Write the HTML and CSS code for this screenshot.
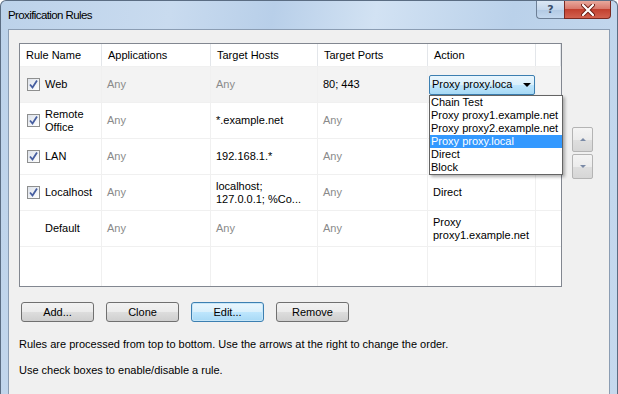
FILE: index.html
```html
<!DOCTYPE html>
<html lang="en">
<head>
    <meta charset="UTF-8">
    <title>Proxification Rules</title>
    <link rel="stylesheet" href="styles.css">
</head>
<body>
    <div class="window">
        <div class="titlebar">
            <span class="title">Proxification Rules</span>
            <div class="caption-buttons">
                <div class="cap-btn help">?</div>
                <div class="cap-btn close">
                    <svg width="14" height="12" viewBox="0 0 14 12">
                        <path d="M2 1 L12 11 M12 1 L2 11" stroke="#6b1d14" stroke-width="4" stroke-linecap="round"/>
                        <path d="M2 1 L12 11 M12 1 L2 11" stroke="#fff" stroke-width="2.2" stroke-linecap="round"/>
                    </svg>
                </div>
            </div>
        </div>

        <div class="client">
            <div class="list-area">
                <div class="listview">
                    <div class="lv-row header">
                        <div class="cell">Rule Name</div>
                        <div class="cell">Applications</div>
                        <div class="cell">Target Hosts</div>
                        <div class="cell">Target Ports</div>
                        <div class="cell">Action</div>
                        <div class="cell last"></div>
                    </div>

                    <div class="lv-row hot">
                        <div class="cell name"><span class="check"></span>Web</div>
                        <div class="cell any">Any</div>
                        <div class="cell any">Any</div>
                        <div class="cell">80; 443</div>
                        <div class="cell action-edit">
                            <div class="combo">
                                <span class="combo-text">Proxy proxy.loca</span>
                                <span class="combo-arrow"></span>
                                <ul class="combo-list">
                                    <li>Chain Test</li>
                                    <li>Proxy proxy1.example.net</li>
                                    <li>Proxy proxy2.example.net</li>
                                    <li class="selected">Proxy proxy.local</li>
                                    <li>Direct</li>
                                    <li>Block</li>
                                </ul>
                            </div>
                        </div>
                        <div class="cell last"></div>
                    </div>

                    <div class="lv-row">
                        <div class="cell name"><span class="check"></span>Remote<br>Office</div>
                        <div class="cell any">Any</div>
                        <div class="cell">*.example.net</div>
                        <div class="cell any">Any</div>
                        <div class="cell"></div>
                        <div class="cell last"></div>
                    </div>

                    <div class="lv-row">
                        <div class="cell name"><span class="check"></span>LAN</div>
                        <div class="cell any">Any</div>
                        <div class="cell">192.168.1.*</div>
                        <div class="cell any">Any</div>
                        <div class="cell"></div>
                        <div class="cell last"></div>
                    </div>

                    <div class="lv-row">
                        <div class="cell name"><span class="check"></span>Localhost</div>
                        <div class="cell any">Any</div>
                        <div class="cell">localhost;<br>127.0.0.1; %Co...</div>
                        <div class="cell any">Any</div>
                        <div class="cell">Direct</div>
                        <div class="cell last"></div>
                    </div>

                    <div class="lv-row">
                        <div class="cell name"><span class="no-check"></span>Default</div>
                        <div class="cell any">Any</div>
                        <div class="cell any">Any</div>
                        <div class="cell any">Any</div>
                        <div class="cell">Proxy<br>proxy1.example.net</div>
                        <div class="cell last"></div>
                    </div>

                    <div class="lv-row filler">
                        <div class="cell"></div>
                        <div class="cell"></div>
                        <div class="cell"></div>
                        <div class="cell"></div>
                        <div class="cell"></div>
                        <div class="cell last"></div>
                    </div>
                </div>

                <div class="order-buttons">
                    <div class="order-btn"><span class="tri up"></span></div>
                    <div class="order-btn"><span class="tri down"></span></div>
                </div>
            </div>

            <div class="buttons">
                <button type="button">Add...</button>
                <button type="button">Clone</button>
                <button type="button" class="focused">Edit...</button>
                <button type="button">Remove</button>
            </div>

            <p class="hint">Rules are processed from top to bottom. Use the arrows at the right to change the order.</p>
            <p class="hint">Use check boxes to enable/disable a rule.</p>
        </div>
    </div>
</body>
</html>
```

FILE: styles.css
```css
* {
    box-sizing: border-box;
}
body {
    margin: 0;
    font-family: "Liberation Sans", Arial, sans-serif; /* Arial widths */
    font-size: 11px;
    color: #000;
    background: #fff;
}

/* window frame */
.window {
    width: 618px;
    height: 394px;
    overflow: hidden;
    display: flex;
    flex-direction: column;
    border: 1px solid #5b6d83;
    border-bottom: none;
    border-radius: 6px 6px 0 0;
    background: linear-gradient(100deg, #bcd2ea 0%, #c9dbef 25%, #b8cfe9 40%, #d2e2f3 55%, #bad1ea 75%, #c6d9ee 100%);
}
.titlebar {
    height: 28px;
    display: flex;
    justify-content: space-between;
    align-items: flex-start;
    padding-left: 7px;
    padding-right: 6px;
}
.title {
    line-height: 28px;
    font-size: 11.5px;
    letter-spacing: -0.6px;
    color: #000;
}
.caption-buttons {
    display: flex;
}
.cap-btn {
    height: 18px;
    display: flex;
    align-items: center;
    justify-content: center;
    border: 1px solid #6d7f96;
    border-top: none;
}
.help {
    width: 28px;
    border-right: none;
    border-radius: 0 0 0 4px;
    background: linear-gradient(#dbe7f4 0%, #c5d7ec 50%, #b2c9e3 51%, #c4d8ee 100%);
    color: #3b4f6b;
    font-family: "DejaVu Sans", sans-serif;
    font-weight: bold;
    font-size: 11px;
}
.close {
    width: 47px;
    border-color: #7a2a22;
    border-radius: 0 0 4px 0;
    background: linear-gradient(#e8a89c 0%, #d9796c 45%, #c2402f 50%, #d2614f 100%);
}

/* client area */
.client {
    flex: 1;
    margin: 0 7px;
    border: 1px solid #8b9db3;
    border-bottom: none;
    background: #f0f0f0;
    padding: 13px 0 0 10px;
}
.list-area {
    display: flex;
    gap: 10px;
}
.listview {
    width: 543px;
    height: 244px;
    border: 1px solid #828790;
    background: #fff;
    display: flex;
    flex-direction: column;
}
.lv-row {
    display: grid;
    grid-template-columns: 82px 109px 107px 110px 108px 1fr;
    height: 36px;
    border-bottom: 1px solid #f0f0f0;
}
.lv-row.header {
    height: 23px;
    border-bottom: 1px solid #f0f0f0;
}
.lv-row.header .cell {
    padding-left: 6px;
    border-right: 1px solid #e3e6ea;
}
.lv-row.hot {
    background: #f3f3f3;
}
.lv-row.filler {
    flex: 1;
    border-bottom: none;
}
.cell {
    display: flex;
    align-items: center;
    padding-left: 5px;
    line-height: 13px;
    border-right: 1px solid #f0f0f0;
    white-space: nowrap;
}
.cell.last {
    border-right: none;
}
.cell.any {
    color: #8a8a8a;
}
.cell.name {
    padding-left: 7px;
}
.check, .no-check {
    width: 13px;
    height: 13px;
    margin-right: 5px;
    flex-shrink: 0;
}
.check {
    border: 1px solid #8e8f8f;
    background:
        url("data:image/svg+xml,%3Csvg xmlns='http://www.w3.org/2000/svg' width='11' height='11'%3E%3Cpath d='M2 5.5 L4.5 8.5 L9 1.5' fill='none' stroke='%23465ea0' stroke-width='1.8'/%3E%3C/svg%3E") center no-repeat,
        linear-gradient(135deg, #dde2ea, #ffffff);
}

/* inline combobox editing the Action column */
.cell.action-edit {
    padding-left: 1px;
}
.combo {
    position: relative;
    width: 107px;
    height: 20px;
    border: 1px solid #3c7fb1;
    border-radius: 2px;
    background: linear-gradient(#eaf6fd 0%, #d9f0fc 49%, #bee6fd 50%, #a7d9f5 100%);
    display: flex;
    align-items: center;
    padding-left: 2px;
}
.combo-text {
    width: 84px;
    white-space: nowrap;
}
.combo-arrow {
    margin-left: 7px;
    width: 0;
    height: 0;
    border-left: 4px solid transparent;
    border-right: 4px solid transparent;
    border-top: 4px solid #000;
}
.combo-list {
    position: absolute;
    top: 19px;
    left: -1px;
    width: 134px;
    margin: 0;
    padding: 0;
    list-style: none;
    background: #fff;
    border: 1px solid #646464;
    box-shadow: 2px 2px 3px rgba(0, 0, 0, 0.3);
    z-index: 2;
}
.combo-list li {
    height: 13px;
    line-height: 13px;
    padding-left: 1px;
    white-space: nowrap;
}
.combo-list li.selected {
    background: #3399ff;
    color: #fff;
}

/* up / down order buttons */
.order-buttons {
    margin-top: 84px;
    display: flex;
    flex-direction: column;
    gap: 2px;
}
.order-btn {
    width: 21px;
    height: 25px;
    border: 1px solid #b4b4b4;
    border-radius: 2px;
    background: linear-gradient(#f4f4f4 0%, #ececec 50%, #dfdfdf 51%, #d6d6d6 100%);
    display: flex;
    align-items: center;
    justify-content: center;
}
.tri {
    width: 0;
    height: 0;
    border-left: 3px solid transparent;
    border-right: 3px solid transparent;
}
.tri.up {
    border-bottom: 3px solid #7a8aa6;
}
.tri.down {
    border-top: 3px solid #7a8aa6;
}

/* push buttons */
.buttons {
    display: flex;
    gap: 12px;
    margin-top: 15px;
    padding-left: 2px;
}
button {
    width: 73px;
    height: 20px;
    padding: 0;
    font-family: inherit;
    font-size: 11px;
    color: #000;
    border: 1px solid #707070;
    border-radius: 3px;
    background: linear-gradient(#f2f2f2 0%, #ebebeb 49%, #dddddd 50%, #cfcfcf 100%);
}
button.focused {
    border-color: #3c7fb1;
    background: linear-gradient(#eaf6fd 0%, #d9f0fc 49%, #bee6fd 50%, #a7d9f5 100%);
    box-shadow: inset 0 0 0 1px #c6e6f8;
}
.hint {
    margin: 0;
    line-height: 13px;
}
.hint:first-of-type {
    margin-top: 16px;
}
.hint + .hint {
    margin-top: 13px;
}
```
